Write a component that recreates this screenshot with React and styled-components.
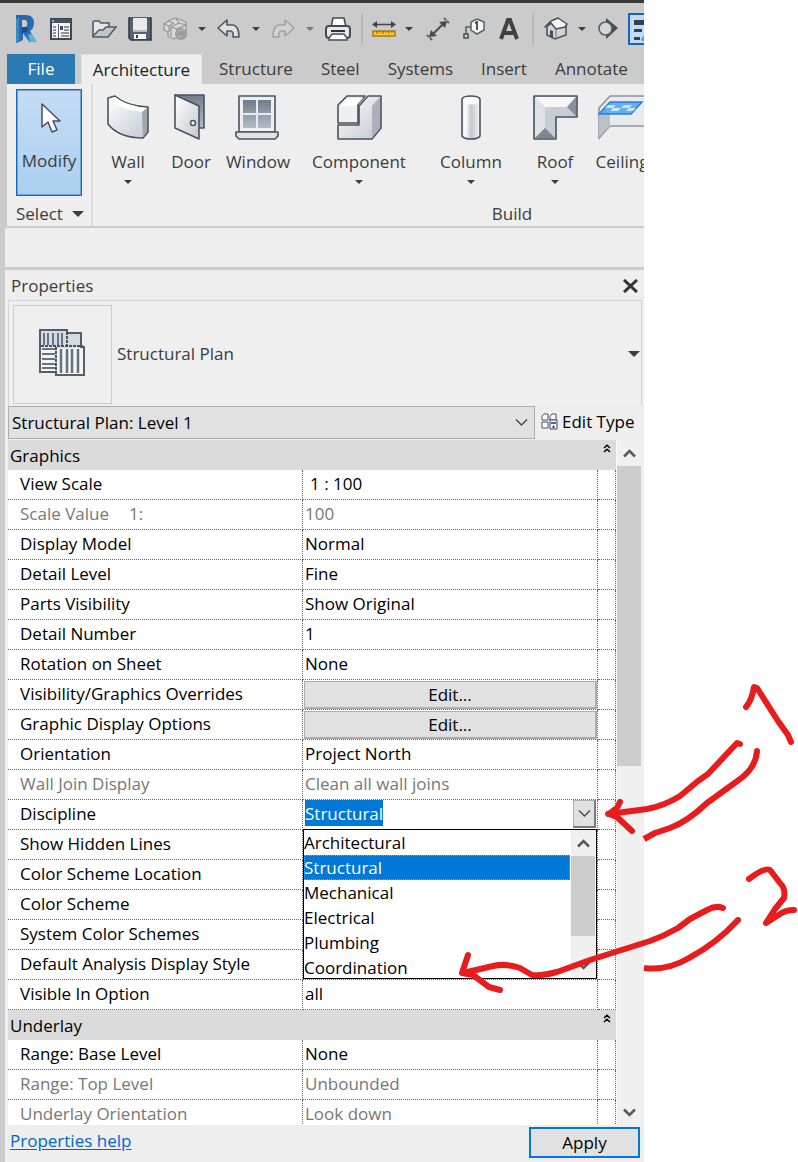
import React, { useState } from 'react';
import styled, { createGlobalStyle, css } from 'styled-components';

const GlobalStyle = createGlobalStyle`
  * {
    box-sizing: border-box;
  }

  body {
    margin: 0;
    background: #fff;
    font-family: "Open Sans", "Noto Sans", sans-serif;
    font-size: 17px;
    line-height: 24px;
    color: #3c3c3c;
  }

  button,
  input,
  select {
    margin: 0;
    padding: 0;
    border: 0;
    border-radius: 0;
    background: none;
    font: inherit;
    color: inherit;
  }

  svg {
    display: block;
    flex: none;
  }
`;

const Page = styled.div`
  position: relative;
  display: grid;
  grid-template-columns: minmax(0, 1fr) 154px;
  height: 100vh;
  overflow: hidden;
`;

const AppWindow = styled.main`
  display: flex;
  flex-direction: column;
  min-width: 0;
  min-height: 0;
  overflow: hidden;
  padding-left: 5px;
  border-top: 3px solid #3a3a3a;
  background: #cbcbcb;
`;

const Toolbar = styled.div`
  display: flex;
  align-items: center;
  flex: none;
  height: 51px;
  padding-left: 5px;
`;

const ToolbarButton = styled.button`
  display: flex;
  align-items: center;
  justify-content: center;
  flex: none;
  width: ${props => props.$width}px;
  height: 32px;

  ${props =>
    props.$active &&
    css`
      justify-content: flex-start;
      border: 2px solid #1467c0;
      background: #c2dbf5;
    `}
`;

const Separator = styled.span`
  flex: none;
  width: 2px;
  height: 32px;
  background: #b9b9b9;
`;

const Tabs = styled.nav`
  display: flex;
  flex: none;
  height: 30px;
  padding-left: 2px;
`;

const Tab = styled.button`
  flex: none;
  padding: 0 14px;
  white-space: nowrap;

  ${props =>
    props.$file &&
    css`
      width: 68px;
      margin-right: 6px;
      background: #2a7ab3;
      color: #fff;
    `}

  ${props =>
    props.$current &&
    css`
      width: 121px;
      padding: 0;
      margin-right: 3px;
      border: 1px solid #e2e2e2;
      border-bottom: 0;
      background: #eee;
      color: #222;
    `}
`;

const Ribbon = styled.div`
  display: flex;
  flex: none;
  height: 142px;
  margin-left: 2px;
  overflow: hidden;
  background: #eee;
`;

const SelectPanel = styled.div`
  display: flex;
  flex-direction: column;
  flex: none;
  width: 86px;
  padding: 5px 9px 0;
  border-right: 2px solid #dcdcdc;
`;

const ModifyButton = styled.button`
  display: flex;
  flex-direction: column;
  align-items: center;
  width: 66px;
  height: 108px;
  padding-top: 8px;
  border: 1px solid #1467c0;
  background: linear-gradient(#c4dcf5, #abcfef);
  box-shadow: inset 0 0 0 1px #6fa5dc;
`;

const PanelMenu = styled.button`
  display: flex;
  align-items: center;
  gap: 9px;
  height: 30px;
  padding-top: 6px;
`;

const BuildPanel = styled.section`
  display: flex;
  flex-direction: column;
  flex: none;
  width: 838px;
`;

const Tools = styled.div`
  display: flex;
  height: 118px;
  padding-top: 8px;
`;

const ToolButton = styled.button`
  display: flex;
  flex-direction: column;
  align-items: center;
  flex: none;
  width: ${props => props.$width}px;
`;

const ToolLabel = styled.span`
  margin: 8px 0 6px;
  line-height: 24px;
`;

const PanelTitle = styled.div`
  text-align: center;
`;

const OptionsBar = styled.div`
  flex: none;
  height: 44px;
  border-top: 2px solid #cbcbcb;
  border-bottom: 3px solid #cbcbcb;
  background: #eee;
`;

const Palette = styled.section`
  display: flex;
  flex: 1;
  flex-direction: column;
  min-height: 0;
  padding: 0 2px 0 3px;
  background: #eee;
`;

const PaletteHeader = styled.header`
  display: flex;
  align-items: center;
  justify-content: space-between;
  flex: none;
  height: 30px;
  padding: 2px 4px 0 3px;
`;

const PaletteTitle = styled.h2`
  margin: 0;
  font-size: 17px;
  font-weight: 400;
`;

const TypeSelector = styled.button`
  display: flex;
  align-items: center;
  flex: none;
  height: 106px;
  padding: 1px 1px 0 4px;
  border: 1px solid #d4d4d4;
  border-bottom: 0;
  background: #efefef;
  text-align: left;
`;

const Thumbnail = styled.span`
  display: flex;
  align-items: center;
  justify-content: center;
  width: 99px;
  height: 99px;
  padding: 0 2px 4px 0;
  border: 1px solid #cecece;
`;

const TypeName = styled.span`
  flex: 1;
  padding-left: 5px;
`;

const InstanceRow = styled.div`
  display: flex;
  align-items: stretch;
  flex: none;
  height: 34px;
  padding-bottom: 1px;
  color: #000;
`;

const SelectBox = styled.div`
  display: grid;
  flex: 1;
  align-items: center;
  border: 1px solid #adadad;
  background: #e1e1e1;

  > * {
    grid-area: 1 / 1;
  }

  > svg {
    justify-self: end;
    margin-right: 6px;
    pointer-events: none;
  }
`;

const InstanceSelect = styled.select`
  height: 100%;
  padding-left: 3px;
  appearance: none;
`;

const EditType = styled.button`
  display: flex;
  align-items: center;
  gap: 4px;
  width: 107px;
  padding: 0 0 2px 6px;
  white-space: nowrap;
`;

const Scroller = styled.div`
  display: flex;
  flex: 1;
  min-height: 0;
  overflow: hidden;
`;

const TableArea = styled.div`
  flex: 1;
  min-width: 0;
  overflow: hidden;
`;

const PropertyTable = styled.table`
  width: 100%;
  table-layout: fixed;
  border-spacing: 0;
  background: #fff;
  color: #000;
`;

const GutterCol = styled.col`
  width: 18px;
`;

const SectionCell = styled.th`
  height: 30px;
  padding: 0;
  background: #dbdbdb;
  font-weight: 400;
  text-align: left;
`;

const SectionButton = styled.button`
  display: flex;
  justify-content: space-between;
  width: 100%;
  height: 30px;
  padding: 4px 5px 0 2px;
`;

const Row = styled.tr`
  color: ${props => (props.$muted ? '#777' : '#000')};
`;

const cell = css`
  height: 30px;
  padding: 0;
  border-right: 1px dotted #666;
  border-bottom: 1px dotted #666;
  line-height: 26px;
  white-space: nowrap;
`;

const NameCell = styled.th`
  ${cell}
  padding: 0 0 2px 12px;
  font-weight: 400;
  text-align: left;
`;

const ValueCell = styled.td`
  ${cell}
  padding: ${props => (props.$flush ? '0' : '0 0 2px 2px')};
`;

const ScaleRatio = styled.span`
  padding-left: 5px;
`;

const GutterCell = styled.td`
  ${cell}
`;

const NumberHint = styled.span`
  margin-left: 20px;
`;

const EditButton = styled.button`
  display: block;
  width: calc(100% - 1px);
  height: 28px;
  margin-left: 1px;
  border: 1px solid #adadad;
  border-right-width: 2px;
  border-bottom-width: 2px;
  background: #e1e1e1;
  line-height: 25px;
`;

const Combo = styled.div`
  position: relative;
  display: flex;
  align-items: flex-start;
  justify-content: space-between;
  height: 29px;
  padding: 0 1px 0 2px;
`;

const ComboInput = styled.input`
  field-sizing: content;
  height: 26px;
  padding-top: 1px;
  background: #0078d7;
  color: #fff;
  line-height: 25px;
`;

const ComboButton = styled.button`
  display: flex;
  align-items: center;
  justify-content: center;
  width: 23px;
  height: 28px;
  border: 1px solid #adadad;
  border-right: 2px solid #7a7a7a;
  border-bottom: 2px solid #7a7a7a;
  background: #e1e1e1;
`;

const Popup = styled.div`
  position: absolute;
  z-index: 1;
  top: 29px;
  left: 0;
  right: 0;
  display: flex;
  height: 150px;
  overflow: hidden;
  border: 1px solid #000;
  background: #fff;
`;

const OptionList = styled.select`
  flex: 1;
  height: 150px;
  overflow: hidden;
  outline: 0;
  color: #000;

  option {
    height: 25px;
    min-height: 25px;
    padding: 1px 0 0;
    line-height: 24px;
  }

  option:checked {
    background: #0078d7 linear-gradient(#0078d7, #0078d7);
    color: #fff;
    outline: 1px dotted #e08a2a;
    outline-offset: -1px;
  }
`;

const ScrollTrack = styled.div`
  display: flex;
  flex-direction: column;
  flex: none;
  width: 26px;
  border-left: 1px solid #fafafa;
  background: #f0f0f0;
`;

const ScrollButton = styled.button`
  display: flex;
  align-items: center;
  justify-content: center;
  flex: none;
  width: 24px;
  height: 26px;
`;

const ScrollThumb = styled.div`
  flex: none;
  width: 24px;
  height: ${props => props.$height}px;
  margin-bottom: auto;
  background: #cdcdcd;
`;

const Footer = styled.footer`
  display: flex;
  align-items: flex-start;
  justify-content: space-between;
  flex: none;
  height: 37px;
  padding: 2px 2px 0 2px;
`;

const HelpLink = styled.a`
  margin-top: 2px;
  color: #0066cc;
  text-underline-offset: 2px;
`;

const ApplyButton = styled.button`
  width: 111px;
  height: 31px;
  border: 2px solid #0078d7;
  background: #e1e1e1;
  color: #000;
`;

const Markup = styled.svg`
  position: absolute;
  z-index: 2;
  top: 670px;
  right: 0;
  pointer-events: none;
`;

const Caret = ({ size = 8, color = '#3c3c3c' }) => (
  <svg width={size} height={size / 2} viewBox="0 0 8 4">
    <path d="M0 0h8L4 4z" fill={color} />
  </svg>
);

const Chevron = ({ up, bold }) => (
  <svg width="13" height="9" viewBox="0 0 13 9">
    <path
      d={up ? 'M1 7.500L6.500 2L12 7.500' : 'M1 1.500L6.500 7L12 1.500'}
      fill="none"
      stroke={bold ? '#5a5a5a' : '#444'}
      strokeWidth={bold ? 2.6 : 1.3}
    />
  </svg>
);

const Collapse = () => (
  <svg width="8" height="9" viewBox="0 0 8 9">
    <path d="M1 4L4 1.200L7 4M1 8L4 5.200L7 8" fill="none" stroke="#000" strokeWidth="1.500" />
  </svg>
);

const HiddenSvg = styled.svg`
  position: absolute;
`;

const Gradients = () => (
  <HiddenSvg width="0" height="0" aria-hidden="true">
    <defs>
      <linearGradient id="metal" x1="0" y1="0" x2="1" y2="1">
        <stop offset="0" stopColor="#fff" />
        <stop offset="1" stopColor="#c3c9d1" />
      </linearGradient>
      <linearGradient id="pane" x1="0" y1="0" x2="0" y2="1">
        <stop offset="0" stopColor="#6f7b8b" />
        <stop offset="1" stopColor="#b4bcc8" />
      </linearGradient>
      <linearGradient id="tube" x1="0" y1="0" x2="1" y2="0">
        <stop offset="0" stopColor="#e4e6ea" />
        <stop offset="0.2" stopColor="#fff" />
        <stop offset="0.5" stopColor="#c2c7ce" />
        <stop offset="1" stopColor="#f6f7f8" />
      </linearGradient>
      <linearGradient id="brand" x1="0" y1="0" x2="1" y2="1">
        <stop offset="0" stopColor="#2f62ab" />
        <stop offset="0.6" stopColor="#256cb4" />
        <stop offset="1" stopColor="#5fbbe6" />
      </linearGradient>
    </defs>
  </HiddenSvg>
);

const LogoIcon = () => (
  <svg width="24" height="28" viewBox="0 0 24 28">
    <path
      d="M2 0H12C18 0 20 4 20 8C20 12 18 15 16 16L23 27H15L9 18V25L3 28H2zM8 5V12H11C14 12 14 5 11 5z"
      fill="url(#brand)"
      fillRule="evenodd"
    />
    <path d="M2 4L5 2V26L3 28H2z" fill="#3f86c6" />
    <path d="M8 12H12C14 13 14 14 14 16L9 18L8 20z" fill="#1b4c88" />
    <path d="M14 20L18 19L23 27H17z" fill="#5cb4e2" />
  </svg>
);

const BrowserIcon = () => (
  <svg width="22" height="22" viewBox="0 0 22 22">
    <path d="M1 1H21V21H1z" fill="#f4f4f4" stroke="#3d4552" strokeWidth="2" />
    <path d="M1 1H21V5H1z" fill="#465163" />
    <path d="M2 2H4V4H2z" fill="#74b1e8" />
    <path d="M8 6H9V20H8z" fill="#59616c" />
    <path d="M3 9H6M3 12H6M3 15H6M3 18H6M14 9H19M14 12H19M11 15H19M11 18H19" stroke="#6b727c" strokeWidth="1.500" />
    <path d="M10 8H13V12H10z" fill="#414b5a" />
  </svg>
);

const OpenIcon = () => (
  <svg width="26" height="20" viewBox="0 0 26 20">
    <path d="M2 17V3L3 2H8L10 4H18V8" fill="#e4e6e9" stroke="#515966" strokeWidth="1.600" />
    <path d="M2 17L8 11L12 11L15 8H25L17 18H2z" fill="#bfc6d0" stroke="#515966" strokeWidth="1.500" />
  </svg>
);

const SaveIcon = () => (
  <svg width="24" height="24" viewBox="0 0 24 24">
    <path d="M1 1H23V23H3L1 21z" fill="#566173" stroke="#323b49" strokeWidth="1.600" />
    <path d="M5 1H19V13H5z" fill="#e8eaed" />
    <path d="M5 13H19V15H5z" fill="#b5bac2" />
    <path d="M6 17H18V22H6z" fill="#fff" />
    <path d="M8 18H10V21H8z" fill="#333b48" />
  </svg>
);

const SyncIcon = () => (
  <svg width="26" height="24" viewBox="0 0 26 24">
    <g stroke="#979797" strokeWidth="1.300" fill="#d8d8d8" strokeLinejoin="round">
      <path d="M2 7L8 3L14 1L19 3L24 5V15L12 22L6 19V15L2 13z" />
      <path d="M2 7L7 9V15M7 9L12 6M6 4L12 6M9 10L15 12V21M9 10V19M9 10L17 6L24 8L15 12M14 1L17 6" fill="none" />
    </g>
    <circle cx="19" cy="17" r="6" fill="#9c9c9c" />
    <path d="M15 16C17 12 21 13 23 15M15 19C18 21 21 20 23 18" fill="none" stroke="#bcbcbc" />
  </svg>
);

const TurnIcon = ({ flip, faded }) => (
  <svg width="24" height="20" viewBox="0 0 24 20">
    <path
      transform={flip ? 'matrix(-1 0 0 1 24 0)' : undefined}
      d="M1 9L10 1V6H16Q22 7 22 18H16Q17 12 13 12H10V17z"
      fill={faded ? '#d2d2d2' : '#dfe1e4'}
      stroke={faded ? '#a2a2a2' : '#4d5561'}
      strokeWidth="1.600"
      strokeLinejoin="round"
    />
  </svg>
);

const PrintIcon = () => (
  <svg width="26" height="24" viewBox="0 0 26 24">
    <path d="M6 10L8 1H19L21 10" fill="#fff" stroke="#434b57" strokeWidth="1.600" />
    <rect x="1" y="9" width="24" height="12" rx="3" fill="#e6e8eb" stroke="#434b57" strokeWidth="2" />
    <path d="M6 13H20V15H6z" fill="#2b323c" />
    <path d="M4 21L7 17H19L22 21V23H4z" fill="#fafafa" stroke="#434b57" strokeWidth="1.400" />
  </svg>
);

const MeasureIcon = () => (
  <svg width="24" height="18" viewBox="0 0 24 18">
    <path d="M2 4.500H22" stroke="#3d4654" strokeWidth="1.600" />
    <path d="M0 4.500L5 1V8zM24 4.500L19 1V8z" fill="#3d4654" />
    <path d="M1 11H23V16H1z" fill="#ffc928" stroke="#ad7b16" strokeWidth="1.600" />
    <path d="M5 11V14M8 11V13M11 11V14M14 11V13M17 11V14M20 11V13" stroke="#8b6010" />
  </svg>
);

const DimensionIcon = () => (
  <svg width="24" height="24" viewBox="0 0 24 24">
    <path d="M6 18L18 6" stroke="#434b57" strokeWidth="2" />
    <path d="M3 20L5 13L11 19zM21 4L13 5L19 11z" fill="#434b57" />
    <path d="M1 18L6 23M18 1L23 6" stroke="#59616c" strokeWidth="2" strokeDasharray="3 1" />
  </svg>
);

const TagIcon = () => (
  <svg width="22" height="22" viewBox="0 0 22 22">
    <path d="M8 9H3V16" fill="none" stroke="#59616c" strokeWidth="1.500" />
    <path d="M1 16H5V20H1z" fill="#ddd" stroke="#434b57" strokeWidth="1.500" />
    <path d="M14 1L21 4V12L14 16L8 12V4z" fill="#f5f5f5" stroke="#59616c" strokeWidth="1.500" />
    <path d="M12 5L14 4V12" fill="none" stroke="#333" strokeWidth="1.600" />
  </svg>
);

const TextIcon = () => (
  <svg width="20" height="22" viewBox="0 0 20 22">
    <path d="M2 21L9 2H11L18 21M5 15H15" fill="none" stroke="#414141" strokeWidth="4" />
  </svg>
);

const HouseIcon = () => (
  <svg width="24" height="23" viewBox="0 0 24 23">
    <path d="M3 9V18L11 22L22 18V8L14 2z" fill="#cfd3d9" stroke="#464e5a" strokeWidth="1.500" />
    <path d="M1 10L7 4L14 1L23 7L21 10L12 12L7 6z" fill="#f3f4f5" stroke="#464e5a" strokeWidth="1.500" strokeLinejoin="round" />
    <path d="M12 12V22" stroke="#6b727c" />
    <path d="M6 13L9 14V21L6 19z" fill="#464e5a" />
  </svg>
);

const SectionIcon = () => (
  <svg width="21" height="22" viewBox="0 0 21 22">
    <path d="M9 0L21 10L9 21z" fill="#434b57" />
    <circle cx="8.500" cy="10.500" r="6.500" fill="#d4d6d8" stroke="#59616c" strokeWidth="1.600" />
  </svg>
);

const ThinLinesIcon = () => (
  <svg width="22" height="28" viewBox="0 0 22 28">
    <path d="M4 5H22V10H4zM4 14H12V17H4zM4 22H10V25H4z" fill="#383f4a" />
    <path d="M14 14H22V17H14z" fill="#383f4a" />
    <path d="M14 20L17 18V28L11 25z" fill="#4b9be8" />
  </svg>
);

const CursorIcon = () => (
  <svg width="28" height="43" viewBox="0 0 28 43">
    <path d="M7 6V29L13 24L17 34L22 32L18 23H25z" fill="#fff" stroke="#4a4f58" strokeWidth="1.500" strokeLinejoin="round" />
  </svg>
);

const outline = { stroke: '#4b525d', strokeWidth: 1.600, strokeLinejoin: 'round' };

const WallIcon = () => (
  <svg width="44" height="50" viewBox="0 0 44 50">
    <path d="M2 6L9 4Q20 14 42 15V40L37 46Q13 46 2 32z" fill="url(#metal)" {...outline} />
    <path d="M3 7L9 5Q20 14 41 16L36 20Q14 18 3 7z" fill="#fff" />
    <path d="M36 20L41 16V40L37 45z" fill="#9da5b1" />
  </svg>
);

const DoorIcon = () => (
  <svg width="48" height="50" viewBox="0 0 48 50">
    <path d="M8 3H37V36H30z" fill="url(#pane)" {...outline} />
    <path d="M8 3L32 14V47L8 36z" fill="url(#metal)" {...outline} />
    <circle cx="26" cy="31" r="2.500" fill="#fff" stroke="#4b525d" strokeWidth="1.500" />
  </svg>
);

const WindowIcon = () => (
  <svg width="46" height="50" viewBox="0 0 46 50">
    <path d="M4 4H40V40H4z" fill="#eef0f2" {...outline} />
    <path d="M8 8H36V36H8z" fill="url(#pane)" />
    <path d="M22 8V36M8 22H36" stroke="#e9ebee" strokeWidth="2" />
    <path d="M1 40H43V44L40 47H4L1 44z" fill="#dfe3e6" {...outline} />
  </svg>
);

const ComponentIcon = () => (
  <svg width="46" height="50" viewBox="0 0 46 50">
    <path d="M2 33H23V14L32 4H45V36L36 47H2z" fill="url(#metal)" {...outline} />
    <path d="M36 14L44 5V36L36 46z" fill="#aab1bc" />
    <path d="M2 13L11 4H29L22 12V31H2z" fill="#eff0f2" {...outline} />
    <path d="M4 14H20L27 6H12z" fill="#fff" />
  </svg>
);

const ColumnIcon = () => (
  <svg width="44" height="50" viewBox="0 0 44 50">
    <path d="M13 7Q14 4 22 4Q30 4 31 7V44Q29 47 22 47Q15 47 13 44z" fill="url(#tube)" {...outline} />
    <path d="M14 8Q15 5 22 5Q29 5 30 8V11Q22 14 14 11z" fill="#fff" />
  </svg>
);

const RoofIcon = () => (
  <svg width="46" height="50" viewBox="0 0 46 50">
    <path d="M2 4H45V25H24V47H2z" fill="#c9ced6" {...outline} />
    <path d="M3 5H44L35 15H13z" fill="#f7f7f8" />
    <path d="M3 5L13 15V36L3 46z" fill="#dfe2e7" />
    <path d="M44 5V24L35 15z" fill="#858f9e" />
    <path d="M3 46L13 36L23 46z" fill="#7d8796" />
  </svg>
);

const CeilingIcon = () => (
  <svg width="50" height="50" viewBox="2 0 50 50">
    <path d="M4 16L15 4H54V34H15L4 46z" fill="#e8eaed" stroke="#8f959d" strokeWidth="1.600" />
    <path d="M4 22L15 14V34L4 45z" fill="#bcc1c8" />
    <path d="M4 22L15 10H47L36 22z" fill="#65aef0" stroke="#2380dc" strokeWidth="1.500" />
    <path d="M13 13H21L18 16H10zM29 13H37L34 16H26zM18 16H26L23 19H15zM34 16H41L38 19H31z" fill="#cbe5fc" />
  </svg>
);

const PlanIcon = () => (
  <svg width="48" height="50" viewBox="0 0 48 50">
    <path d="M2 3H29V6H43V20H46V48H18V45H2z" fill="#d6dae3" stroke="#555d69" strokeWidth="2" />
    <path d="M19 21H45V47H19zM3 20H17V44H3z" fill="#f4f5f7" />
    <path d="M6 6V18M10 6V18M15 6V18M20 6V18M24 6V18" stroke="#6b7382" strokeWidth="2" />
    <path d="M4 22H17M4 27H17M4 32H17M4 37H17M4 41H17" stroke="#69717f" strokeWidth="2" />
    <path d="M29 5V19M3 19H45M18 20V46" fill="none" stroke="#4b525d" strokeWidth="2" strokeDasharray="3 1" />
    <path d="M23 22V46M29 22V46M34 22V46M40 22V46" stroke="#69717f" strokeWidth="2.500" />
  </svg>
);

const EditTypeIcon = () => (
  <svg width="17" height="17" viewBox="0 0 17 17">
    <path d="M3 1H7V7H1V3zM9 3L11 1H15V7H9zM1 9H7V15H1z" fill="#fff" stroke="#4b525d" />
    <path d="M9 7H16V16H9z" fill="#fff" stroke="#39414d" />
    <path d="M10 9H15V11H10z" fill="#2a75bb" />
    <path d="M11 14H14M12.500 12.500V15" stroke="#39414d" />
  </svg>
);

const toolbarItems = [
  { label: 'Home', width: 31, icon: <LogoIcon /> },
  { label: 'Project browser', width: 39, icon: <BrowserIcon /> },
  { label: 'Open', width: 48, icon: <OpenIcon /> },
  { label: 'Save', width: 24, icon: <SaveIcon /> },
  { label: 'Synchronize', width: 46, icon: <SyncIcon /> },
  { label: 'Synchronize options', width: 8, icon: <Caret /> },
  { label: 'Undo', width: 46, icon: <TurnIcon /> },
  { label: 'Undo history', width: 8, icon: <Caret /> },
  { label: 'Redo', width: 46, icon: <TurnIcon flip faded /> },
  { label: 'Redo history', width: 8, icon: <Caret color="#777" /> },
  { label: 'Print', width: 47, icon: <PrintIcon /> },
  { separator: true },
  { label: 'Measure', width: 42, icon: <MeasureIcon /> },
  { label: 'Measure options', width: 8, icon: <Caret /> },
  { label: 'Aligned dimension', width: 49, icon: <DimensionIcon /> },
  { label: 'Tag by category', width: 24, icon: <TagIcon /> },
  { label: 'Text', width: 46, icon: <TextIcon /> },
  { separator: true },
  { label: '3D view', width: 43, icon: <HouseIcon /> },
  { label: '3D view options', width: 10, icon: <Caret /> },
  { label: 'Section', width: 41, icon: <SectionIcon /> },
  { label: 'Thin lines', width: 32, icon: <ThinLinesIcon />, active: true }
];

const tabs = ['File', 'Architecture', 'Structure', 'Steel', 'Systems', 'Insert', 'Annotate'];

const tools = [
  { label: 'Wall', width: 70, icon: <WallIcon />, menu: true },
  { label: 'Door', width: 56, icon: <DoorIcon /> },
  { label: 'Window', width: 78, icon: <WindowIcon /> },
  { label: 'Component', width: 124, icon: <ComponentIcon />, menu: true },
  { label: 'Column', width: 100, icon: <ColumnIcon />, menu: true },
  { label: 'Roof', width: 68, icon: <RoofIcon />, menu: true },
  { label: 'Ceiling', width: 66, icon: <CeilingIcon /> }
];

const sections = [
  {
    title: 'Graphics',
    rows: [
      { name: 'View Scale', value: <ScaleRatio>1 : 100</ScaleRatio> },
      { name: 'Scale Value', hint: '1:', value: '100', muted: true },
      { name: 'Display Model', value: 'Normal' },
      { name: 'Detail Level', value: 'Fine' },
      { name: 'Parts Visibility', value: 'Show Original' },
      { name: 'Detail Number', value: '1' },
      { name: 'Rotation on Sheet', value: 'None' },
      { name: 'Visibility/Graphics Overrides', kind: 'edit' },
      { name: 'Graphic Display Options', kind: 'edit' },
      { name: 'Orientation', value: 'Project North' },
      { name: 'Wall Join Display', value: 'Clean all wall joins', muted: true },
      { name: 'Discipline', kind: 'combo' },
      { name: 'Show Hidden Lines' },
      { name: 'Color Scheme Location' },
      { name: 'Color Scheme' },
      { name: 'System Color Schemes' },
      { name: 'Default Analysis Display Style' },
      { name: 'Visible In Option', value: 'all' }
    ]
  },
  {
    title: 'Underlay',
    rows: [
      { name: 'Range: Base Level', value: 'None' },
      { name: 'Range: Top Level', value: 'Unbounded', muted: true },
      { name: 'Underlay Orientation', value: 'Look down', muted: true }
    ]
  }
];

const disciplines = [
  'Architectural',
  'Structural',
  'Mechanical',
  'Electrical',
  'Plumbing',
  'Coordination'
];

const Scrollbar = ({ thumb }) => (
  <ScrollTrack>
    <ScrollButton aria-label="Scroll up">
      <Chevron up bold />
    </ScrollButton>
    <ScrollThumb $height={thumb} />
    <ScrollButton aria-label="Scroll down">
      <Chevron bold />
    </ScrollButton>
  </ScrollTrack>
);

const DisciplineCombo = () => {
  const [value, setValue] = useState('Structural');
  const [isOpen, setIsOpen] = useState(true);

  return (
    <Combo>
      <ComboInput aria-label="Discipline" value={value} readOnly />
      <ComboButton aria-label="Show disciplines" onClick={() => setIsOpen(!isOpen)}>
        <Chevron />
      </ComboButton>
      {isOpen && (
        <Popup>
          <OptionList
            size={6}
            aria-label="Disciplines"
            value={value}
            onChange={e => setValue(e.target.value)}
          >
            {disciplines.map(name => (
              <option key={name}>{name}</option>
            ))}
          </OptionList>
          <Scrollbar thumb={80} />
        </Popup>
      )}
    </Combo>
  );
};

const PropertyValue = ({ row }) => {
  if (row.kind === 'edit') {
    return <EditButton aria-label={`Edit ${row.name}`}>Edit...</EditButton>;
  }
  if (row.kind === 'combo') {
    return <DisciplineCombo />;
  }
  return row.value || null;
};

const Section = ({ title, rows }) => (
  <tbody>
    <tr>
      <SectionCell colSpan={3}>
        <SectionButton>
          {title}
          <Collapse />
        </SectionButton>
      </SectionCell>
    </tr>
    {rows.map(row => (
      <Row key={row.name} $muted={row.muted}>
        <NameCell scope="row">
          {row.name}
          {row.hint && <NumberHint>{row.hint}</NumberHint>}
        </NameCell>
        <ValueCell $flush={Boolean(row.kind)}>
          <PropertyValue row={row} />
        </ValueCell>
        <GutterCell />
      </Row>
    ))}
  </tbody>
);

const RedMarkup = () => (
  <Markup width="350" height="330" viewBox="448 670 350 330" aria-hidden="true">
    <g fill="none" stroke="#e81c1c" strokeWidth="6" strokeLinecap="round" strokeLinejoin="round">
      <path d="M746 707Q752 700 754 687L757 688L778 721L788 735L791 742" />
      <path d="M740 744L737 743L708 774L698 781L680 796Q664 806 647 809L632 811L608 814" />
      <path d="M620 802L617 808L609 814L617 817L632 831" />
      <path d="M749 879Q765 867 770 870L780 883Q786 889 784 898L775 909L766 923L780 914Q786 910 794 910" />
      <path d="M723 908Q715 905 707 910L690 919L678 928Q664 936 650 941L590 960L557 972Q542 976 532 975L520 968Q506 963 493 966L463 973" />
      <path d="M468 955L462 973L473 975L489 987L500 990" />
    </g>
    <g fill="none" stroke="#e81c1c" strokeWidth="6" strokeLinejoin="round">
      <path d="M757 751Q756 769 736 782L707 803Q687 822 670 828L655 833L644 839" />
      <path d="M738 920Q717 943 689 958Q667 971 644 968" />
    </g>
    <g fill="#e81c1c">
      <circle cx="757" cy="751" r="3" />
      <circle cx="738" cy="920" r="3" />
    </g>
  </Markup>
);

const App = () => (
  <Page>
    <GlobalStyle />
    <Gradients />
    <AppWindow>
      <Toolbar>
        {toolbarItems.map((item, i) =>
          item.separator ? (
            <Separator key={i} />
          ) : (
            <ToolbarButton
              key={item.label}
              aria-label={item.label}
              $width={item.width}
              $active={item.active}
            >
              {item.icon}
            </ToolbarButton>
          )
        )}
      </Toolbar>
      <Tabs>
        {tabs.map(name => (
          <Tab key={name} $file={name === 'File'} $current={name === 'Architecture'}>
            {name}
          </Tab>
        ))}
      </Tabs>
      <Ribbon>
        <SelectPanel>
          <ModifyButton>
            <CursorIcon />
            <ToolLabel>Modify</ToolLabel>
          </ModifyButton>
          <PanelMenu>
            Select
            <Caret size={12} />
          </PanelMenu>
        </SelectPanel>
        <BuildPanel>
          <Tools>
            {tools.map(tool => (
              <ToolButton key={tool.label} $width={tool.width}>
                {tool.icon}
                <ToolLabel>{tool.label}</ToolLabel>
                {tool.menu && <Caret />}
              </ToolButton>
            ))}
          </Tools>
          <PanelTitle>Build</PanelTitle>
        </BuildPanel>
      </Ribbon>
      <OptionsBar />
      <Palette>
        <PaletteHeader>
          <PaletteTitle>Properties</PaletteTitle>
          <button aria-label="Close">
            <svg width="15" height="14" viewBox="0 0 15 14">
              <path d="M1 1L14 13M14 1L1 13" stroke="#333" strokeWidth="3" />
            </svg>
          </button>
        </PaletteHeader>
        <TypeSelector>
          <Thumbnail>
            <PlanIcon />
          </Thumbnail>
          <TypeName>Structural Plan</TypeName>
          <Caret size={12} />
        </TypeSelector>
        <InstanceRow>
          <SelectBox>
            <InstanceSelect aria-label="View">
              <option>Structural Plan: Level 1</option>
            </InstanceSelect>
            <Chevron />
          </SelectBox>
          <EditType>
            <EditTypeIcon />
            Edit Type
          </EditType>
        </InstanceRow>
        <Scroller>
          <TableArea>
            <PropertyTable>
              <colgroup>
                <col />
                <col />
                <GutterCol />
              </colgroup>
              {sections.map(section => (
                <Section key={section.title} {...section} />
              ))}
            </PropertyTable>
          </TableArea>
          <Scrollbar thumb={300} />
        </Scroller>
        <Footer>
          <HelpLink href="#help">Properties help</HelpLink>
          <ApplyButton>Apply</ApplyButton>
        </Footer>
      </Palette>
    </AppWindow>
    <RedMarkup />
  </Page>
);

export default App;
